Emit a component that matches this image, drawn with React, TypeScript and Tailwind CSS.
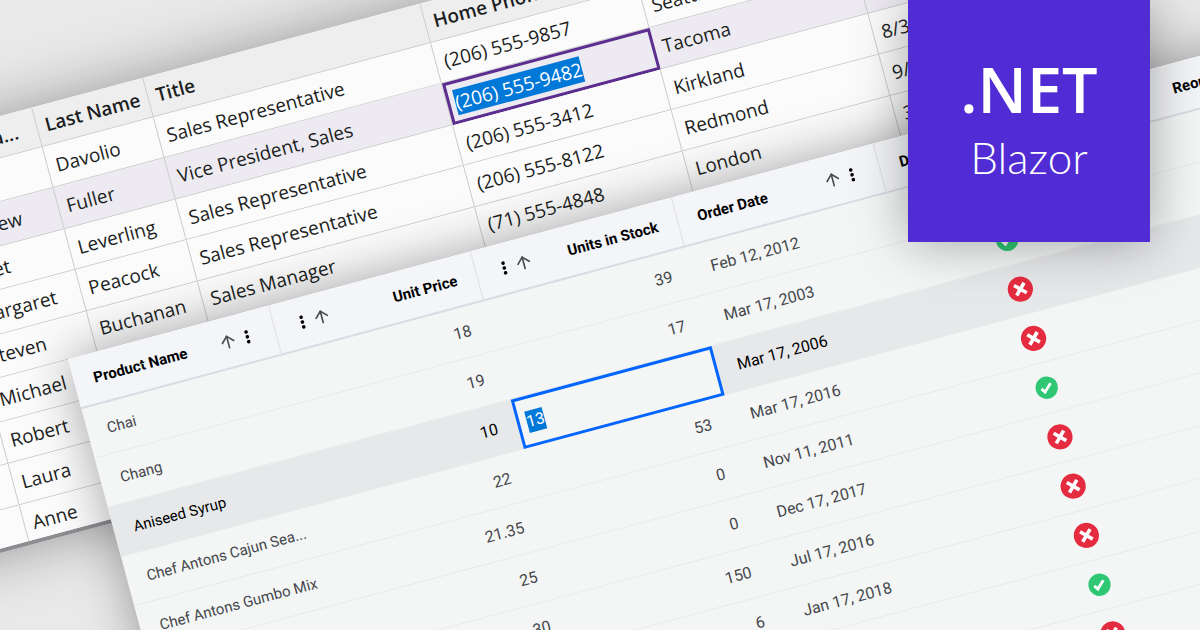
import React from "react";
import { ArrowUp } from "lucide-react";

type Employee = { first: string; last: string; title: string; phone: string; city: string; birth: string };
type Product = { name: string; price: string; stock: string; date: string; discontinued: boolean };

const employees: Employee[] = [
  { first: "", last: "Davolio", title: "Sales Representative", phone: "(206) 555-9857", city: "Seattle", birth: "" },
  { first: "Andrew", last: "Fuller", title: "Vice President, Sales", phone: "(206) 555-9482", city: "Tacoma", birth: "" },
  { first: "Janet", last: "Leverling", title: "Sales Representative", phone: "(206) 555-3412", city: "Kirkland", birth: "8/30/1963" },
  { first: "Margaret", last: "Peacock", title: "Sales Representative", phone: "(206) 555-8122", city: "Redmond", birth: "9/19/1937" },
  { first: "Steven", last: "Buchanan", title: "Sales Manager", phone: "(71) 555-4848", city: "London", birth: "3/4/1955" },
  { first: "Michael", last: "", title: "", phone: "", city: "", birth: "" },
  { first: "Robert", last: "", title: "", phone: "", city: "", birth: "" },
  { first: "Laura", last: "", title: "", phone: "", city: "", birth: "" },
  { first: "Anne", last: "", title: "", phone: "", city: "", birth: "" },
];

const products: Product[] = [
  { name: "Chai", price: "18", stock: "39", date: "Feb 12, 2012", discontinued: true },
  { name: "Chang", price: "19", stock: "17", date: "Mar 17, 2003", discontinued: true },
  { name: "Aniseed Syrup", price: "10", stock: "13", date: "Mar 17, 2006", discontinued: false },
  { name: "Chef Antons Cajun Sea...", price: "22", stock: "53", date: "Mar 17, 2016", discontinued: false },
  { name: "Chef Antons Gumbo Mix", price: "21.35", stock: "0", date: "Nov 11, 2011", discontinued: true },
  { name: "", price: "25", stock: "0", date: "Dec 17, 2017", discontinued: false },
  { name: "", price: "30", stock: "150", date: "Jul 17, 2016", discontinued: false },
  { name: "", price: "", stock: "6", date: "Jan 17, 2018", discontinued: false },
  { name: "", price: "", stock: "", date: "", discontinued: true },
  { name: "", price: "", stock: "", date: "", discontinued: false },
  { name: "", price: "", stock: "", date: "", discontinued: false },
];

function StatusIcon({ on }: { on: boolean }) {
  return on ? (
    <svg viewBox="0 0 24 24" className="mx-auto size-6" role="img" aria-label="Yes">
      <circle cx="12" cy="12" r="11.2" fill="#2fc774" />
      <path d="M6.6 11.8L9.2 15.8L16.8 8.6" fill="none" stroke="#fff" strokeWidth="2.8" />
    </svg>
  ) : (
    <svg viewBox="0 0 26 26" className="mx-auto size-[26px]" role="img" aria-label="No">
      <circle cx="13" cy="13" r="12.6" fill="#e52b3f" />
      <path d="M7.8 7.8l10.4 10.4M18.2 7.8L7.8 18.2" stroke="#fff" strokeWidth="3.6" />
    </svg>
  );
}

function SortButton({ label }: { label: string }) {
  return (
    <button type="button" aria-label={`Sort by ${label}`} className="text-[#4b4c50]">
      <ArrowUp className="size-5" strokeWidth={2} />
    </button>
  );
}

function MenuButton({ label }: { label: string }) {
  return (
    <button type="button" aria-label={`${label} menu`} className="text-black">
      <svg viewBox="0 0 16 16" className="size-4" fill="currentColor">
        <circle cx="8" cy="3" r="1.8" />
        <circle cx="8" cy="8" r="1.8" />
        <circle cx="8" cy="13" r="1.8" />
      </svg>
    </button>
  );
}

function ProductHeader({ label, numeric = false }: { label: string; numeric?: boolean }) {
  return (
    <th scope="col" className="h-[52px] border-r border-b-2 border-r-[#dfe0e5] border-b-[#dadbe3] p-0 text-[15px] font-bold">
      <div className="flex items-center justify-between px-5 whitespace-nowrap">
        {numeric ? (
          <>
            <span className="flex items-center gap-0.5">
              <MenuButton label={label} />
              <SortButton label={label} />
            </span>
            <span>{label}</span>
          </>
        ) : (
          <>
            <span>{label}</span>
            <span className="flex items-center gap-0.5">
              <SortButton label={label} />
              <MenuButton label={label} />
            </span>
          </>
        )}
      </div>
    </th>
  );
}

function EmployeeGrid() {
  const head = "truncate border-r border-b border-[#cccccc] py-0 pr-0 pl-2 text-left font-semibold";
  const cell = "truncate border-r border-b border-[#cccccc] px-2 py-0";
  return (
    <section
      aria-label="Employees"
      className="absolute top-[167px] left-[-190px] h-[422px] origin-top-left rotate-[-15deg] overflow-hidden border-b-4 border-[#8b8d91] bg-[#fbfbfb] font-['Open_Sans','Noto_Sans',sans-serif] text-[19px] leading-[26px] text-[#1c1e22] shadow-[0_0_60px_rgba(0,0,0,0.35)]"
    >
      <table className="h-[423px] w-[1212px] table-fixed border-separate border-spacing-0">
        <colgroup>
          <col className="w-[115px]" />
          <col className="w-[115px]" />
          <col className="w-[115px]" />
          <col className="w-[287px]" />
          <col className="w-[215px]" />
          <col className="w-[215px]" />
          <col className="w-[150px]" />
        </colgroup>
        <thead className="bg-[#eeeeee]">
          <tr className="h-[41px]">
            <th className={head} />
            <th scope="col" className={head}>First Na...</th>
            <th scope="col" className={head}>Last Name</th>
            <th scope="col" className={head}>Title</th>
            <th scope="col" className={head}>Home Phone</th>
            <th scope="col" className={head}>City</th>
            <th scope="col" className={head}>Birth Date</th>
          </tr>
        </thead>
        <tbody>
          {employees.map((e, i) => (
            <tr key={i} className={i === 1 ? "h-[42px] bg-[#edebf1]" : "h-[42px] bg-[#fbfbfb]"}>
              <td className={cell} />
              <td className={cell}>{e.first}</td>
              <td className={cell}>{e.last}</td>
              <td className={cell}>{e.title}</td>
              {i === 1 ? (
                <td className="border-3 border-[#5b2d8e] px-[5px] py-0">
                  <input
                    aria-label="Home Phone"
                    defaultValue={e.phone}
                    className="block h-[26px] field-sizing-content bg-[#0078d7] text-white outline-none"
                  />
                </td>
              ) : (
                <td className={cell}>{e.phone}</td>
              )}
              <td className={cell}>{e.city}</td>
              <td className={cell}>{e.birth}</td>
            </tr>
          ))}
        </tbody>
      </table>
    </section>
  );
}

function ProductGrid() {
  const cell = "h-[51px] border-b border-[#e8eaeb] px-5 py-0 whitespace-nowrap";
  return (
    <section
      aria-label="Products"
      className="absolute top-[359px] left-[68px] origin-top-left rotate-[-15deg] bg-[#f4f6f6] font-[Roboto,'Noto_Sans',sans-serif] text-base leading-[22px] text-[#45474c] shadow-[0_0_50px_rgba(0,0,0,0.35)]"
    >
      <table className="w-[1251px] table-fixed border-separate border-spacing-0">
        <colgroup>
          <col className="w-[208px]" />
          <col className="w-[209px]" />
          <col className="w-[208px]" />
          <col className="w-[209px]" />
          <col className="w-[208px]" />
          <col className="w-[209px]" />
        </colgroup>
        <thead className="bg-[#f4f5f8] text-black">
          <tr>
            <ProductHeader label="Product Name" />
            <ProductHeader label="Unit Price" numeric />
            <ProductHeader label="Units in Stock" numeric />
            <ProductHeader label="Order Date" />
            <ProductHeader label="Discontinued" />
            <ProductHeader label="Reorder Level" numeric />
          </tr>
        </thead>
        <tbody>
          {products.map((p, i) => (
            <tr key={i} className={i === 2 ? "bg-[#e7e8ea] text-black" : ""}>
              <td className={`${cell} text-[15px]`}>{p.name}</td>
              <td className={`${cell} text-right`}>{p.price}</td>
              {i === 2 ? (
                <td className="h-[51px] border-3 border-[#0265ff] bg-[#f4f6f6] px-[7px] py-0">
                  <input
                    aria-label="Units in Stock"
                    defaultValue={p.stock}
                    className="block h-[22px] field-sizing-content bg-[#0078d7] text-white outline-none"
                  />
                </td>
              ) : (
                <td className={`${cell} text-right`}>{p.stock}</td>
              )}
              <td className={cell}>{p.date}</td>
              <td className={cell}>
                <StatusIcon on={p.discontinued} />
              </td>
              <td className={cell} />
            </tr>
          ))}
        </tbody>
      </table>
    </section>
  );
}

export default function App() {
  return (
    <main className="relative h-screen w-full overflow-hidden bg-[#e9e9e9]">
      <EmployeeGrid />
      <ProductGrid />
      <div className="absolute top-0 right-[50px] flex size-[242px] flex-col items-center justify-center bg-[#512bd4] text-white shadow-[0_0_50px_rgba(0,0,0,0.35)]">
        <p className="font-['Open_Sans',sans-serif] text-[63px] leading-[72px] font-semibold">.NET</p>
        <p className="font-[Lato,sans-serif] text-[44px] leading-[64px] font-light">Blazor</p>
      </div>
    </main>
  );
}
